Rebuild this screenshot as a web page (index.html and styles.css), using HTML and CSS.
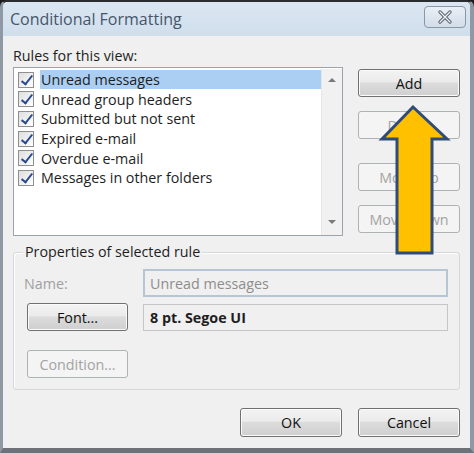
FILE: index.html
```html
<!DOCTYPE html>
<html>
<head>
<meta charset="utf-8">
<link rel="stylesheet" href="styles.css">
</head>
<body>
<div class="window">
  <div class="titlebar">
    <span class="title">Conditional Formatting</span>
    <span class="close">
      <svg width="22" height="14" viewBox="0 0 22 14"><path d="M6 2 L16 12 M16 2 L6 12" stroke="#5d6570" stroke-width="3.2" stroke-linecap="round"/><path d="M6 2 L16 12 M16 2 L6 12" stroke="#eef2f6" stroke-width="1.2" stroke-linecap="round"/></svg>
    </span>
  </div>
  <div class="content">
    <div class="rules-label">Rules for this view:</div>
    <div class="rules-row">
      <div class="listbox">
        <ul class="items">
          <li class="item selected"><span class="check"></span><span class="text">Unread messages</span></li>
          <li class="item"><span class="check"></span><span class="text">Unread group headers</span></li>
          <li class="item"><span class="check"></span><span class="text">Submitted but not sent</span></li>
          <li class="item"><span class="check"></span><span class="text">Expired e-mail</span></li>
          <li class="item"><span class="check"></span><span class="text">Overdue e-mail</span></li>
          <li class="item"><span class="check"></span><span class="text">Messages in other folders</span></li>
        </ul>
        <div class="scrollbar">
          <span class="arrow-up"></span>
          <span class="arrow-down"></span>
        </div>
      </div>
      <div class="side-buttons">
        <div class="btn">Add</div>
        <div class="btn disabled">Delete</div>
        <div class="btn disabled gap-lg">Move Up</div>
        <div class="btn disabled">Move Down</div>
      </div>
    </div>
    <div class="group">
      <div class="group-label">Properties of selected rule</div>
      <div class="prop-row">
        <span class="name-label">Name:</span>
        <div class="field disabled-field">Unread messages</div>
      </div>
      <div class="prop-row">
        <div class="btn small">Font...</div>
        <div class="field font-field">8 pt. Segoe UI</div>
      </div>
      <div class="prop-row cond-row">
        <div class="btn small disabled">Condition...</div>
      </div>
    </div>
    <div class="footer">
      <div class="btn">OK</div>
      <div class="btn">Cancel</div>
    </div>
  </div>
  <svg class="callout" width="74" height="154" viewBox="378 103 74 154">
    <polygon points="413,107 382,139 397,139 397,253 432,253 432,139 447,139" fill="#ffc000" stroke="#2f4c78" stroke-width="3" stroke-linejoin="miter"/>
  </svg>
</div>
</body>
</html>
```

FILE: styles.css
```css
* { box-sizing: border-box; }
html, body { margin: 0; padding: 0; }
body {
  width: 474px;
  height: 453px;
  background: #1c1c1c;
  font-family: "Open Sans", "Noto Sans", sans-serif;
  font-size: 14.3px;
  color: #1e1e1e;
  overflow: hidden;
}
.window {
  position: relative;
  width: 474px;
  height: 453px;
  background: #f0f0f0;
  border-top: 2px solid #2a2c30;
  border-left: 3px solid #8e99a5;
  border-right: 4px solid #8e99a5;
  border-bottom: 5px solid #6d7278;
  border-radius: 7px 7px 0 0;
  display: flex;
  flex-direction: column;
}
.titlebar {
  height: 34px;
  background: linear-gradient(#dbe6f2, #d0deec);
  display: flex;
  align-items: center;
  justify-content: space-between;
  padding: 0 4px 0 7px;
  border-radius: 5px 5px 0 0;
}
.title {
  font-size: 16px;
  color: #46566a;
}
.close {
  width: 42px;
  height: 22px;
  border: 1px solid #8a97a6;
  border-radius: 4px;
  background: linear-gradient(#e8eff6, #d3dde8);
  display: flex;
  align-items: center;
  justify-content: center;
  margin-top: -4px;
}
.content {
  flex: 1;
  padding: 0 6px 0 10px;
  display: flex;
  flex-direction: column;
}
.rules-label {
  margin-top: 9px;
  height: 22px;
  line-height: 22px;
}
.rules-row {
  display: flex;
  gap: 15px;
}
.listbox {
  width: 330px;
  height: 169px;
  border: 1px solid #9ca3aa;
  background: #fff;
  display: flex;
  padding: 2px 1px 1px 2px;
}
.items {
  list-style: none;
  margin: 0;
  padding: 0;
  flex: 1;
}
.item {
  height: 19.6px;
  display: flex;
  align-items: center;
}
.check {
  width: 16px;
  height: 16px;
  margin-left: 2px;
  margin-right: 6px;
  border: 1px solid #8e8f8f;
  background: linear-gradient(135deg, #dedede, #ffffff);
  position: relative;
  flex: none;
}
.check::after {
  content: "";
  position: absolute;
  left: 5px;
  top: 0px;
  width: 4px;
  height: 10px;
  border-right: 2px solid #2a4a8c;
  border-bottom: 2px solid #2a4a8c;
  transform: rotate(38deg);
}
.text {
  height: 19px;
  line-height: 19px;
  padding-left: 1px;
  flex: 1;
}
.item.selected .text {
  background: #aacff3;
}
.scrollbar {
  width: 21px;
  background: #f1f1f1;
  border-left: 1px solid #e6e6e6;
  position: relative;
  margin: -1px -1px -1px 0;
}
.arrow-up, .arrow-down {
  position: absolute;
  left: 6px;
  width: 0;
  height: 0;
  border-left: 4px solid transparent;
  border-right: 4px solid transparent;
}
.arrow-up { top: 9px; border-bottom: 4px solid #7a7a7a; }
.arrow-down { bottom: 11px; border-top: 4px solid #7a7a7a; }
.side-buttons {
  width: 102px;
  padding-top: 2px;
  display: flex;
  flex-direction: column;
  gap: 14px;
}
.btn {
  height: 28px;
  border: 1px solid #707070;
  border-radius: 3px;
  background: linear-gradient(#f3f3f3 0%, #ebebeb 45%, #dcdcdc 50%, #cfcfcf 100%);
  box-shadow: inset 0 0 0 1px #fbfbfb;
  display: flex;
  align-items: center;
  justify-content: center;
  color: #111;
}
.btn.disabled {
  border-color: #adb2b5;
  background: #f4f4f4;
  box-shadow: none;
  color: #a3a3a3;
}
.side-buttons .gap-lg { margin-top: 10px; }
.group {
  margin-top: 16px;
  width: 447px;
  height: 138px;
  border: 1px solid #d5d9dc;
  border-radius: 3px;
  box-shadow: inset 1px 1px 0 #fff;
  padding: 0 11px 0 13px;
}
.group-label {
  margin-top: -11px;
  margin-left: -4px;
  padding: 0 2px;
  background: #f0f0f0;
  width: max-content;
  line-height: 20px;
}
.prop-row {
  display: flex;
  align-items: center;
  height: 28px;
}
.prop-row:nth-child(2) { margin-top: 7px; }
.prop-row:nth-child(3) { margin-top: 6px; }
.cond-row { margin-top: 19px; }
.name-label {
  width: 116px;
  color: #a0a0a0;
  margin-left: -3px;
  margin-right: 3px;
}
.field {
  width: 305px;
  height: 28px;
  border: 1px solid #b5bfc9;
  background: #f0f0f0;
  display: flex;
  align-items: center;
  padding-left: 5px;
}
.disabled-field {
  border: 2px solid #b8c6d4;
  color: #8d8d8d;
}
.font-field {
  margin-left: 15px;
  height: 27px;
  font-weight: bold;
  border-color: #c6c6c6;
  padding-left: 6px;
}
.btn.small {
  width: 101px;
}
.footer {
  margin-top: 18px;
  display: flex;
  justify-content: flex-end;
  gap: 16px;
  width: 447px;
}
.footer .btn {
  width: 102px;
  height: 29px;
}
.callout {
  position: absolute;
  left: 375px;
  top: 101px;
}
```
